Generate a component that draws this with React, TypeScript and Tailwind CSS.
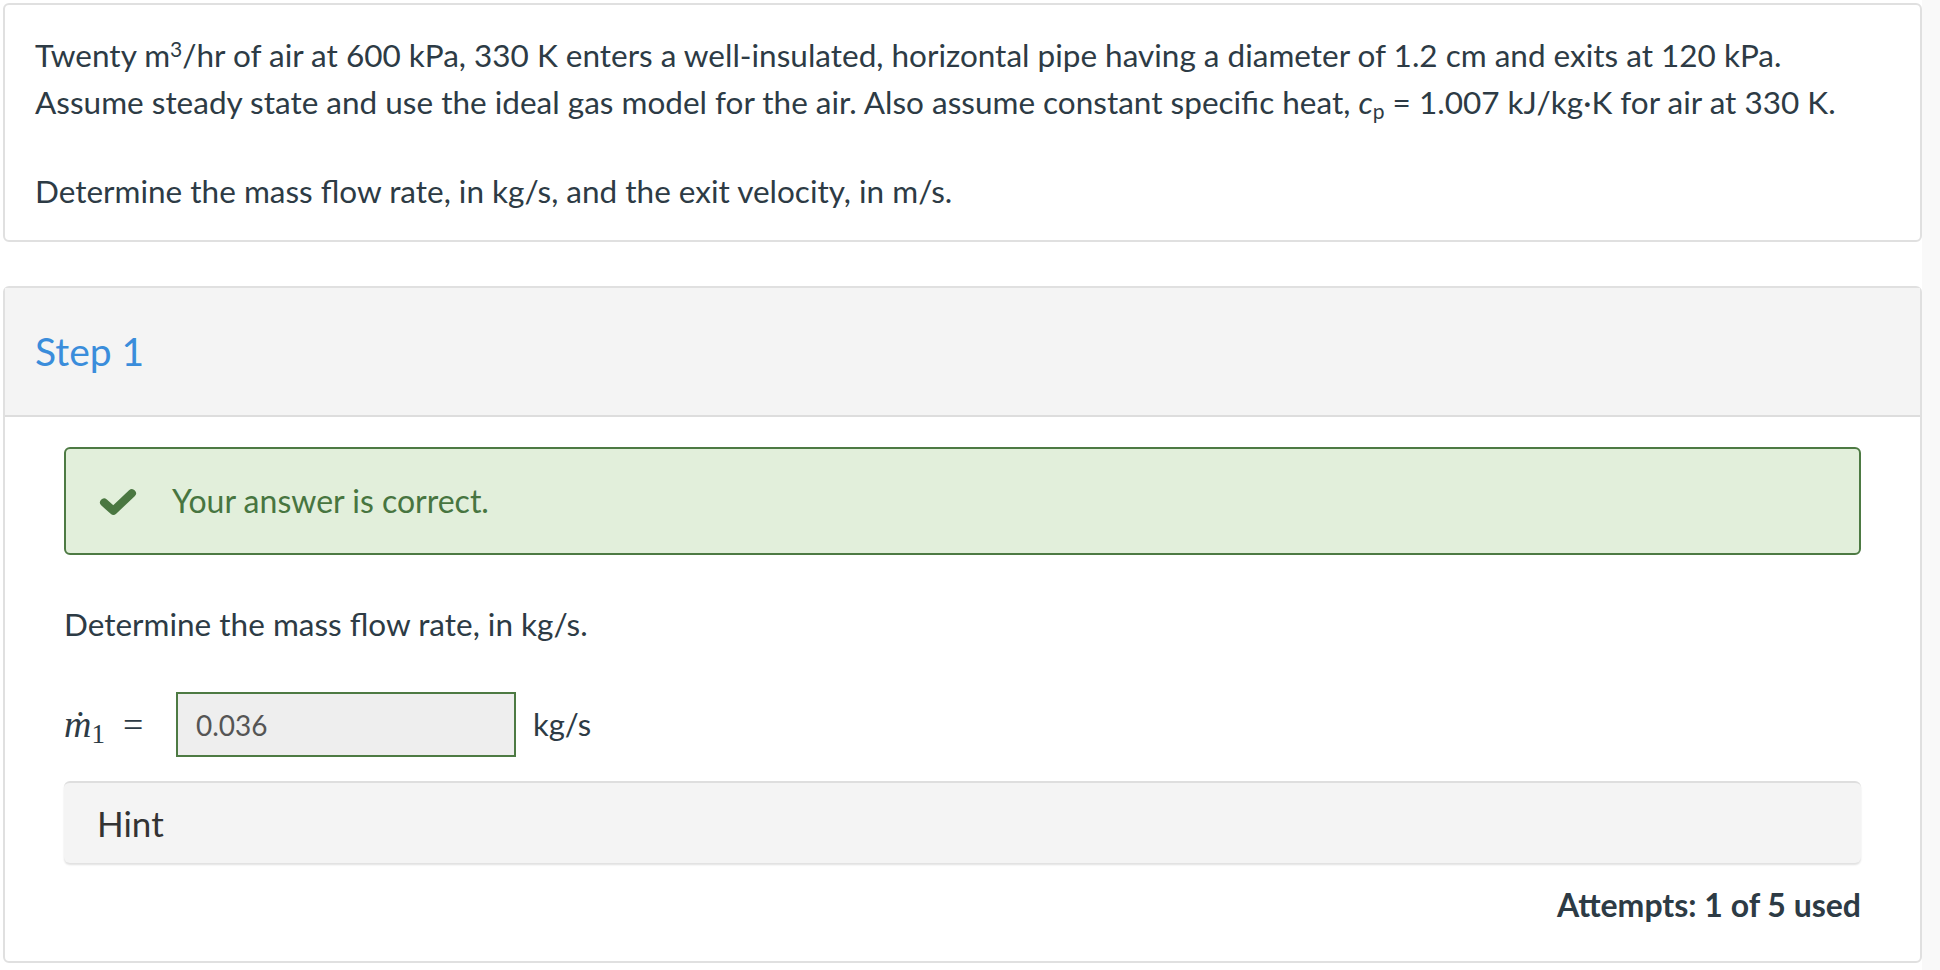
export default function App() {
  return (
    <div className="flex min-h-screen bg-white font-['Lato','Noto_Sans',sans-serif] text-[#2d3b45]">
      <div className="w-[1922px] pl-[3px] pt-[3px] pb-[10px]">
        {/* Question */}
        <div className="rounded-md border-2 border-[#e0e0e0] px-[30px] pt-[27px] pb-[25px] text-[31.5px] leading-[47px]">
          <p>
            Twenty m<sup className="text-[21px]">3</sup>/hr of air at 600 kPa, 330 K enters a well-insulated, horizontal
            pipe having a diameter of 1.2 cm and exits at 120 kPa.
            <br />
            Assume steady state and use the ideal gas model for the air. Also assume constant specific heat,{" "}
            <i>c</i>
            <sub className="text-[21px]">p</sub> = 1.007 kJ/kg·K for air at 330 K.
          </p>
          <p className="mt-[42px]">Determine the mass flow rate, in kg/s, and the exit velocity, in m/s.</p>
        </div>

        {/* Step */}
        <div className="mt-[44px] rounded-md border-2 border-[#e0e0e0]">
          <div className="flex h-[129px] items-center border-b-2 border-[#dddddd] bg-[#f4f4f4] px-[30px]">
            <h2 className="text-[39px] text-[#3a8ddb]">Step 1</h2>
          </div>

          <div className="px-[59px] pt-[30px] pb-[38px]">
            <div className="flex h-[108px] items-center rounded-md border-2 border-[#4d7a43] bg-[#e2efdb] pl-[33px]">
              <svg width="38" height="29" viewBox="0 0 37 28" className="shrink-0">
                <polyline
                  points="5,15 14,23 32,6"
                  fill="none"
                  stroke="#4a7741"
                  strokeWidth="8"
                  strokeLinecap="round"
                  strokeLinejoin="round"
                />
              </svg>
              <span className="ml-[35px] text-[32px] text-[#477540]">Your answer is correct.</span>
            </div>

            <p className="mt-[46px] text-[31.5px] leading-[47px]">Determine the mass flow rate, in kg/s.</p>

            <div className="mt-[44px] flex items-center">
              <span className="flex w-[112px] items-baseline font-['Liberation_Serif',serif] text-[#2d3b45]">
                <i className="text-[38px]">ṁ</i>
                <span className="relative top-[6px] text-[27px]">1</span>
                <span className="ml-[18px] text-[36px]">=</span>
              </span>
              <div className="flex h-[65px] w-[340px] items-center border-2 border-[#4d7a43] bg-[#eeeeee] pl-[18px] text-[28px] text-[#555555]">
                0.036
              </div>
              <span className="ml-[17px] text-[31px]">kg/s</span>
            </div>

            <div className="mt-[24px] flex h-[82px] items-center rounded-md border-t-2 border-[#dedede] bg-[#f4f4f4] pl-[33px] text-[35px] text-[#333333] shadow-[0_2px_2px_rgba(0,0,0,0.12)]">
              Hint
            </div>

            <div className="mt-[24px] text-right text-[32px] leading-[36px] font-bold">Attempts: 1 of 5 used</div>
          </div>
        </div>
      </div>
      <div className="flex-1 bg-[#f9f9f9]" />
    </div>
  );
}
